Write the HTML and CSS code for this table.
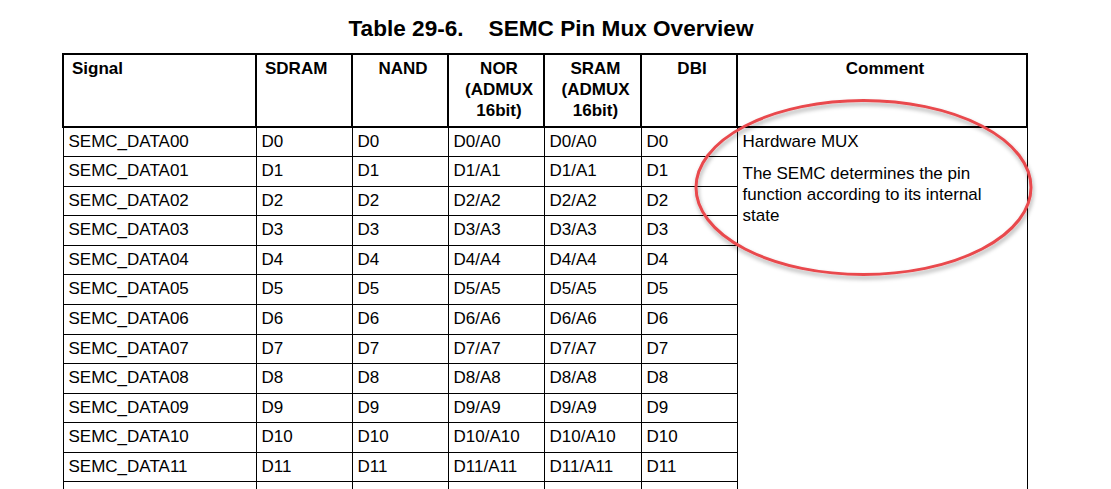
FILE: index.html
```html
<!DOCTYPE html>
<html lang="en">
<head>
<meta charset="utf-8">
<title>SEMC Pin Mux Overview</title>
<link rel="stylesheet" href="styles.css">
</head>
<body>
<div class="page">
  <h1 class="title"><span class="num">Table 29-6.</span><span class="cap">SEMC Pin Mux Overview</span></h1>
  <table class="mux">
    <colgroup>
      <col class="c-signal"><col class="c-std"><col class="c-std"><col class="c-std"><col class="c-sram"><col class="c-std"><col class="c-comment">
    </colgroup>
    <thead>
      <tr>
        <th class="left">Signal</th>
        <th class="left">SDRAM</th>
        <th>NAND</th>
        <th>NOR<br>(ADMUX<br>16bit)</th>
        <th>SRAM<br>(ADMUX<br>16bit)</th>
        <th>DBI</th>
        <th>Comment</th>
      </tr>
    </thead>
    <tbody>
      <tr>
        <td>SEMC_DATA00</td><td>D0</td><td>D0</td><td>D0/A0</td><td>D0/A0</td><td>D0</td>
        <td class="comment" rowspan="13">
          <p class="c1">Hardware MUX</p>
          <p class="c2">The SEMC determines the pin function according to its internal state</p>
        </td>
      </tr>
      <tr><td>SEMC_DATA01</td><td>D1</td><td>D1</td><td>D1/A1</td><td>D1/A1</td><td>D1</td></tr>
      <tr><td>SEMC_DATA02</td><td>D2</td><td>D2</td><td>D2/A2</td><td>D2/A2</td><td>D2</td></tr>
      <tr><td>SEMC_DATA03</td><td>D3</td><td>D3</td><td>D3/A3</td><td>D3/A3</td><td>D3</td></tr>
      <tr><td>SEMC_DATA04</td><td>D4</td><td>D4</td><td>D4/A4</td><td>D4/A4</td><td>D4</td></tr>
      <tr><td>SEMC_DATA05</td><td>D5</td><td>D5</td><td>D5/A5</td><td>D5/A5</td><td>D5</td></tr>
      <tr><td>SEMC_DATA06</td><td>D6</td><td>D6</td><td>D6/A6</td><td>D6/A6</td><td>D6</td></tr>
      <tr><td>SEMC_DATA07</td><td>D7</td><td>D7</td><td>D7/A7</td><td>D7/A7</td><td>D7</td></tr>
      <tr><td>SEMC_DATA08</td><td>D8</td><td>D8</td><td>D8/A8</td><td>D8/A8</td><td>D8</td></tr>
      <tr><td>SEMC_DATA09</td><td>D9</td><td>D9</td><td>D9/A9</td><td>D9/A9</td><td>D9</td></tr>
      <tr><td>SEMC_DATA10</td><td>D10</td><td>D10</td><td>D10/A10</td><td>D10/A10</td><td>D10</td></tr>
      <tr><td>SEMC_DATA11</td><td>D11</td><td>D11</td><td>D11/A11</td><td>D11/A11</td><td>D11</td></tr>
      <tr><td>SEMC_DATA12</td><td>D12</td><td>D12</td><td>D12/A12</td><td>D12/A12</td><td>D12</td></tr>
    </tbody>
  </table>
  <svg class="mark" width="360" height="210" viewBox="0 0 360 210" aria-hidden="true">
    <defs>
      <filter id="sh" x="-10%" y="-10%" width="120%" height="130%">
        <feDropShadow dx="1" dy="3" stdDeviation="2" flood-color="#000" flood-opacity="0.35"/>
      </filter>
    </defs>
    <ellipse cx="173.5" cy="92.5" rx="167.5" ry="87" fill="none" stroke="#e94a4e" stroke-width="3" filter="url(#sh)"/>
  </svg>
</div>
</body>
</html>
```

FILE: styles.css
```css
html, body {
  margin: 0;
  padding: 0;
  background: #ffffff;
}

body {
  font-family: "Liberation Sans", Arial, sans-serif;
  color: #000000;
}

.page {
  position: relative;
  padding-top: 16px;
}

.title {
  margin: 0 0 11px 63px;
  width: 950px;
  padding-left: 13px;
  text-align: center;
  font-size: 22.6px;
  line-height: 26px;
  font-weight: bold;
}

.title .cap {
  margin-left: 25px;
}

.mux {
  margin-left: 62px;
  border-collapse: collapse;
  table-layout: fixed;
  width: 964px;
  font-size: 17px;
}

.c-signal { width: 193px; }
.c-std { width: 96px; }
.c-sram { width: 97px; }
.c-comment { width: 290px; }

.mux th {
  border: 2px solid #000;
  vertical-align: top;
  text-align: center;
  font-weight: bold;
  line-height: 21px;
  padding: 3px 0 5px 6px;
  height: 62px;
}

.mux th.left {
  text-align: left;
  padding-left: 8px;
}

.mux tbody tr {
  height: 29.58px;
}

.mux td {
  border: 1px solid #000;
  vertical-align: top;
  line-height: 20px;
  padding: 4px 5px 0 5px;
  white-space: nowrap;
}

.mux td.comment {
  white-space: normal;
  padding: 4px 8px 0 5px;
}

.comment p {
  margin: 0;
}

.comment .c1 {
  line-height: 20px;
}

.comment .c2 {
  margin-top: 11px;
  line-height: 21px;
}

.mark {
  position: absolute;
  left: 690px;
  top: 95px;
  overflow: visible;
}
```
